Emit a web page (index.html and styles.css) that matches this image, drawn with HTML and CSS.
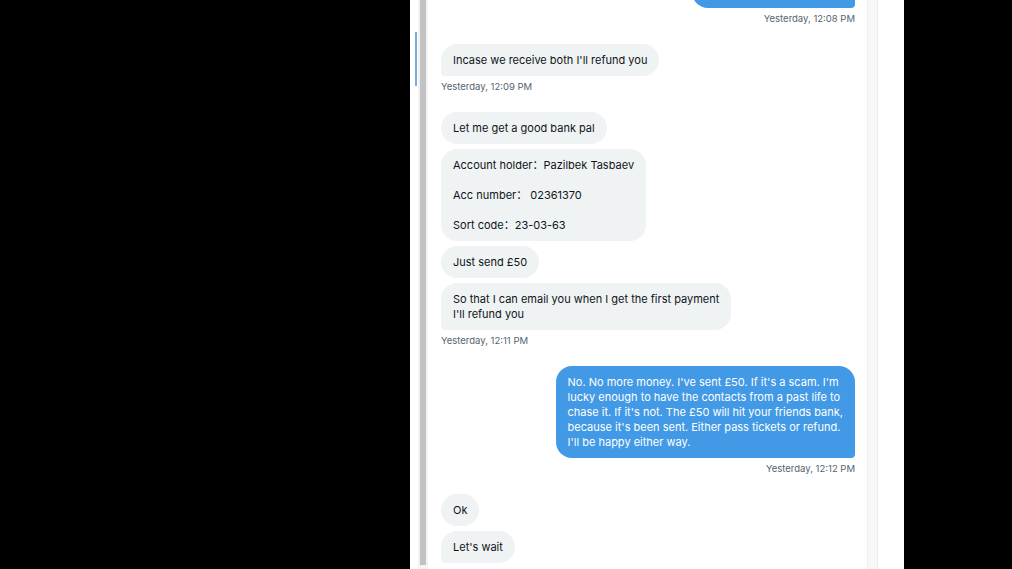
FILE: index.html
```html
<!DOCTYPE html>
<html lang="en">
<head>
    <meta charset="UTF-8">
    <meta name="viewport" content="width=device-width, initial-scale=1.0">
    <title>Messages</title>
    <link rel="stylesheet" href="styles.css">
</head>
<body>
    <div class="panel">
        <!-- left gutter: focus line + scrollbar -->
        <div class="gutter">
            <div class="focus-line"></div>
            <div class="scroll-track"><div class="scroll-thumb"></div></div>
        </div>

        <div class="chat">
            <div class="group sent first">
                <div class="bubble last empty"></div>
                <div class="time">Yesterday, 12:08 PM</div>
            </div>

            <div class="group received">
                <div class="bubble last">Incase we receive both I'll refund you</div>
                <div class="time">Yesterday, 12:09 PM</div>
            </div>

            <div class="group received">
                <div class="bubble">Let me get a good bank pal</div>
                <div class="bubble">Account holder：Pazilbek Tasbaev<br><br>Acc number： 02361370<br><br>Sort code：23-03-63</div>
                <div class="bubble">Just send £50</div>
                <div class="bubble last">So that I can email you when I get the first payment<br>I'll refund you</div>
                <div class="time">Yesterday, 12:11 PM</div>
            </div>

            <div class="group sent">
                <div class="bubble last">No. No more money. I've sent £50. If it's a scam. I'm<br>lucky enough to have the contacts from a past life to<br>chase it. If it's not. The £50 will hit your friends bank,<br>because it's been sent. Either pass tickets or refund.<br>I'll be happy either way.</div>
                <div class="time">Yesterday, 12:12 PM</div>
            </div>

            <div class="group received">
                <div class="bubble">Ok</div>
                <div class="bubble last">Let's wait</div>
                <div class="time">Yesterday, 12:13 PM</div>
            </div>
        </div>

        <div class="side-strip"></div>
    </div>
</body>
</html>
```

FILE: styles.css
```css
html, body {
    margin: 0;
    padding: 0;
    height: 100%;
}
body {
    background-color: #000;
    font-family: 'Inter', 'Noto Sans', 'Noto Sans CJK SC', sans-serif;
    color: #0f1419;
    overflow: hidden;
}
.panel {
    display: flex;
    margin-left: 410px;
    width: 494px;
    height: 569px;
    background-color: #fff;
    overflow: hidden;
}
.gutter {
    display: flex;
    align-items: flex-start;
    width: 31px;
    flex-shrink: 0;
    padding-left: 5px;
    box-sizing: border-box;
}
.focus-line {
    width: 2px;
    height: 54px;
    margin-top: 32px;
    background-color: #7eaad8;
}
.scroll-track {
    width: 10px;
    height: 569px;
    margin-left: 1px;
    background-color: #f3f3f3;
    padding-left: 2px;
    box-sizing: border-box;
}
.scroll-thumb {
    width: 6px;
    height: 565px;
    background-color: #c2c2c2;
}
.chat {
    width: 414px;
    flex-shrink: 0;
    display: flex;
    flex-direction: column;
    padding-top: 1px;
}
.group {
    display: flex;
    flex-direction: column;
    gap: 5px;
    margin-bottom: 19px;
}
.group.first {
    margin-top: -25px;
}
.group.sent {
    align-items: flex-end;
}
.group.received {
    align-items: flex-start;
}
.bubble {
    font-size: 11px;
    line-height: 15px;
    padding: 8.5px 12px;
    border-radius: 16px;
    white-space: nowrap;
    background-color: #eff3f4;
}
.sent .bubble {
    background-color: #4299e6;
    color: #fff;
}
.received .bubble.last {
    border-bottom-left-radius: 4px;
}
.sent .bubble.last {
    border-bottom-right-radius: 4px;
}
.bubble.empty {
    width: 139px;
    height: 15px;
}
.time {
    font-size: 9.5px;
    line-height: 12px;
    color: #536471;
}
.side-strip {
    width: 11px;
    margin-left: 12px;
    flex-shrink: 0;
    background-color: #f8f8f8;
    border-left: 1px solid #eeeeee;
    border-right: 1px solid #eeeeee;
    box-sizing: border-box;
}
```
